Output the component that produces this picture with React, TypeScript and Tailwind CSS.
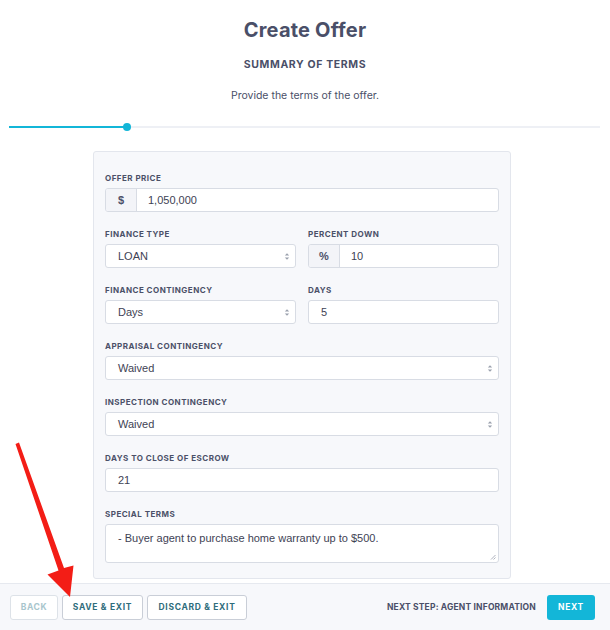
import React from 'react';

const font = { fontFamily: 'Inter, "Liberation Sans", sans-serif' };
const fieldFont = { fontFamily: '"Liberation Sans", Arial, sans-serif' };

const Label: React.FC<{ children: React.ReactNode }> = ({ children }) => (
  <div className="h-3 mb-1 text-[8px] leading-3 font-bold tracking-[0.06em] text-[#4b5068] uppercase">
    {children}
  </div>
);

const SelectArrows = () => (
  <svg width="6" height="9" viewBox="0 0 6 9" className="absolute right-[5px] top-[7px]">
    <path d="M0.8 3.6 L3 1.2 L5.2 3.6 Z" fill="#9aa0ad" />
    <path d="M0.8 5.4 L3 7.8 L5.2 5.4 Z" fill="#9aa0ad" />
  </svg>
);

const SelectBox: React.FC<{ value: string }> = ({ value }) => (
  <div
    className="relative h-6 bg-white border border-[#d8dce4] rounded-[3px] pl-3 flex items-center text-[11px] text-[#3e4254]"
    style={fieldFont}
  >
    {value}
    <SelectArrows />
  </div>
);

const TextBox: React.FC<{ value: string; prefix?: string }> = ({ value, prefix }) => (
  <div
    className="flex h-6 bg-white border border-[#d8dce4] rounded-[3px] overflow-hidden text-[11px] text-[#3e4254]"
    style={fieldFont}
  >
    {prefix && (
      <div className="w-[31px] shrink-0 bg-[#f3f4f8] border-r border-[#d8dce4] flex items-center justify-center font-bold text-[#4b5068]">
        {prefix}
      </div>
    )}
    <div className={`flex items-center ${prefix ? 'pl-[11px]' : 'pl-3'}`}>{value}</div>
  </div>
);

const App: React.FC = () => {
  return (
    <div className="relative w-[610px] h-[630px] bg-white overflow-hidden" style={font}>
      <div className="pt-4 text-center">
        <h1 className="h-7 leading-7 text-[20px] font-bold text-[#4a4f68] tracking-[0.01em]">Create Offer</h1>
        <h2 className="mt-[13px] h-4 leading-4 text-[10.5px] font-bold tracking-[0.06em] text-[#4a4f68]">
          SUMMARY OF TERMS
        </h2>
        <p className="mt-[15px] h-4 leading-4 text-[10.5px] text-[#4a4f68]">Provide the terms of the offer.</p>
      </div>

      {/* progress */}
      <div className="relative mt-[19px] h-2 ml-[9px] mr-[10px] flex items-center">
        <div className="absolute left-0 right-0 h-[2px] bg-[#eef0f5]" />
        <div className="absolute left-0 w-[118px] h-[2px] bg-[#13b6d8]" />
        <div className="absolute left-[114px] w-2 h-2 rounded-full bg-[#13b6d8]" />
      </div>

      {/* card */}
      <div className="mt-5 ml-[93px] w-[418px] bg-[#f7f8fb] border border-[#e3e6ed] rounded-[3px] px-[11px] pt-5 pb-[15px] flex flex-col gap-4">
        <div>
          <Label>Offer Price</Label>
          <TextBox prefix="$" value="1,050,000" />
        </div>
        <div className="grid grid-cols-2 gap-3">
          <div>
            <Label>Finance Type</Label>
            <SelectBox value="LOAN" />
          </div>
          <div>
            <Label>Percent Down</Label>
            <TextBox prefix="%" value="10" />
          </div>
        </div>
        <div className="grid grid-cols-2 gap-3">
          <div>
            <Label>Finance Contingency</Label>
            <SelectBox value="Days" />
          </div>
          <div>
            <Label>Days</Label>
            <TextBox value="5" />
          </div>
        </div>
        <div>
          <Label>Appraisal Contingency</Label>
          <SelectBox value="Waived" />
        </div>
        <div>
          <Label>Inspection Contingency</Label>
          <SelectBox value="Waived" />
        </div>
        <div>
          <Label>Days to Close of Escrow</Label>
          <TextBox value="21" />
        </div>
        <div>
          <Label>Special Terms</Label>
          <div
            className="relative h-[39px] bg-white border border-[#d8dce4] rounded-[3px] pl-3 pt-[5px] text-[11px] text-[#3e4254]"
            style={fieldFont}
          >
            - Buyer agent to purchase home warranty up to $500.
            <svg width="6" height="6" viewBox="0 0 6 6" className="absolute right-[2px] bottom-[2px]">
              <path d="M5.5 1 L1 5.5 M5.5 3.5 L3.5 5.5" stroke="#9aa0ad" strokeWidth="0.8" />
            </svg>
          </div>
        </div>
      </div>

      {/* footer */}
      <div className="mt-1 h-12 bg-[#f7f8fb] border-t border-[#e6e9ef] flex items-center pl-[10px] pr-[15px]">
        <div className="flex gap-1">
          <button className="h-[25px] w-[48px] bg-white border border-[#dde2e8] rounded-[3px] text-[8.5px] font-bold tracking-[0.08em] text-[#a9c6cd]">
            BACK
          </button>
          <button className="h-[25px] w-[81px] bg-white border border-[#c9ced7] rounded-[3px] text-[8.5px] font-bold tracking-[0.08em] text-[#2f6d7c]">
            SAVE &amp; EXIT
          </button>
          <button className="h-[25px] w-[100px] bg-white border border-[#c9ced7] rounded-[3px] text-[8.5px] font-bold tracking-[0.08em] text-[#2f6d7c]">
            DISCARD &amp; EXIT
          </button>
        </div>
        <div className="ml-auto flex items-center gap-[11px]">
          <span className="text-[8.5px] font-bold tracking-[0.02em] text-[#4a4f68]">NEXT STEP: AGENT INFORMATION</span>
          <button className="h-[25px] w-[48px] bg-[#13b6d8] rounded-[3px] text-[8.5px] font-bold tracking-[0.08em] text-white">
            NEXT
          </button>
        </div>
      </div>

      {/* annotation arrow */}
      <svg className="absolute left-0 top-0 pointer-events-none" width="610" height="630" viewBox="0 0 610 630">
        <polygon
          points="15.5,444 19,442.5 64,568 73.5,565.5 70,597 47.5,574.5 58.5,570.5"
          fill="#f31d16"
        />
      </svg>
    </div>
  );
};

export default App;
